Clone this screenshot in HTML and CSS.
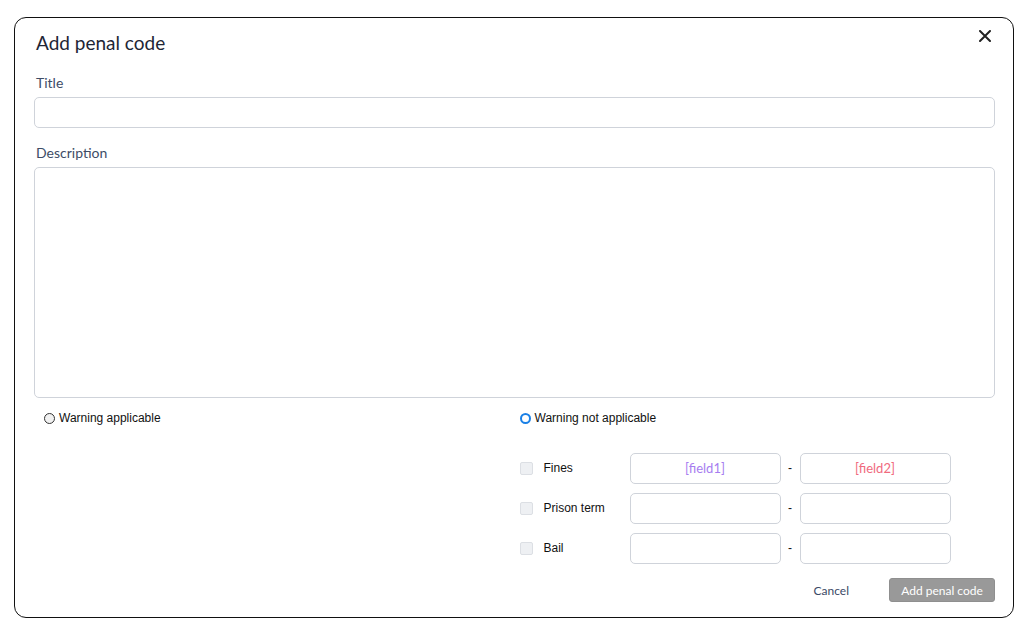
FILE: index.html
```html
<!DOCTYPE html>
<html lang="en">
<head>
    <meta charset="UTF-8">
    <meta name="viewport" content="width=device-width, initial-scale=1.0">
    <title>Add penal code</title>
    <link rel="stylesheet" href="styles.css">
</head>
<body>
    <div class="modal">
        <div class="modal-header">
            <h1>Add penal code</h1>
            <button class="close" type="button" aria-label="Close">
                <svg width="12" height="12" viewBox="0 0 12 12"><path d="M1 1L11 11M11 1L1 11" stroke="#222" stroke-width="2" stroke-linecap="round"/></svg>
            </button>
        </div>

        <form class="penal-form">
            <label class="field-label" for="title">Title</label>
            <input class="text-input" type="text" id="title">

            <label class="field-label desc-label" for="description">Description</label>
            <textarea class="text-area" id="description"></textarea>

            <div class="options">
                <div class="col left-col">
                    <label class="radio"><span class="radio-dot"></span>Warning applicable</label>
                </div>
                <div class="col right-col">
                    <label class="radio"><span class="radio-dot checked"></span>Warning not applicable</label>

                    <div class="ranges">
                        <div class="range-row">
                            <span class="check"></span>
                            <span class="range-label">Fines</span>
                            <input class="range-input purple" type="text" value="[field1]">
                            <span class="dash">-</span>
                            <input class="range-input pink" type="text" value="[field2]">
                        </div>
                        <div class="range-row">
                            <span class="check"></span>
                            <span class="range-label">Prison term</span>
                            <input class="range-input" type="text">
                            <span class="dash">-</span>
                            <input class="range-input" type="text">
                        </div>
                        <div class="range-row">
                            <span class="check"></span>
                            <span class="range-label">Bail</span>
                            <input class="range-input" type="text">
                            <span class="dash">-</span>
                            <input class="range-input" type="text">
                        </div>
                    </div>
                </div>
            </div>

            <div class="actions">
                <button type="button" class="cancel">Cancel</button>
                <button type="submit" class="submit">Add penal code</button>
            </div>
        </form>
    </div>
</body>
</html>
```

FILE: styles.css
```css
body {
    margin: 0;
    padding: 17px 18px 0 14px;
    background: #fff;
    font-family: "Source Sans Pro", Lato, "Noto Sans", sans-serif;
    color: #222;
}
.modal {
    width: 998px;
    height: 599px;
    border: 1px solid #111;
    border-radius: 12px;
}
.modal-header {
    display: flex;
    justify-content: space-between;
    align-items: flex-start;
    padding: 12px 23px 0 21px;
    height: 44px;
}
h1 {
    margin: 0;
    font-size: 19px;
    font-weight: 400;
    color: #1e2535;
    line-height: 26px;
}
.close {
    background: none;
    border: none;
    padding: 0;
    margin-top: 0;
    margin-right: -1px;
    cursor: pointer;
    line-height: 0;
}
.penal-form {
    display: flex;
    flex-direction: column;
    padding: 0 18px 0 19px;
}
.field-label {
    font-size: 14px;
    color: #3e4c66;
    line-height: 18px;
    padding-left: 2px;
    margin-bottom: 5px;
}
.desc-label {
    margin-top: 16px;
}
.text-input {
    height: 31px;
    box-sizing: border-box;
    border: 1px solid #cfd3da;
    border-radius: 5px;
    font: inherit;
}
.text-area {
    height: 231px;
    box-sizing: border-box;
    border: 1px solid #cfd3da;
    border-radius: 5px;
    resize: none;
    font: inherit;
}
.options {
    display: flex;
    margin-top: 13px;
    font-family: "Liberation Sans", Arial, sans-serif;
    font-size: 12px;
    color: #111;
}
.col {
    width: 50%;
}
.left-col {
    padding-left: 10px;
}
.right-col {
    padding-left: 0;
}
.radio {
    display: flex;
    align-items: center;
    gap: 4px;
    height: 14px;
}
.radio-dot {
    width: 9px;
    height: 9px;
    border: 1px solid #333;
    border-radius: 50%;
    background: #f1f1f1;
    flex: none;
}
.radio-dot.checked {
    width: 7px;
    height: 7px;
    border: 2px solid #1a80e6;
    background: #fff;
}
.ranges {
    display: flex;
    flex-direction: column;
    gap: 10px;
    margin-top: 28px;
}
.range-row {
    display: flex;
    align-items: center;
    height: 30px;
}
.check {
    width: 11px;
    height: 11px;
    border: 1px solid #dcdfe4;
    border-radius: 2px;
    background: #eef0f3;
    flex: none;
}
.range-label {
    width: 86px;
    margin-left: 11px;
}
.range-input {
    width: 151px;
    height: 31px;
    box-sizing: border-box;
    border: 1px solid #cfd3da;
    border-radius: 5px;
    text-align: center;
    font-family: "Source Sans Pro", Lato, "Noto Sans", sans-serif;
    font-size: 13px;
}
.range-input.purple {
    color: #a77df0;
}
.range-input.pink {
    color: #f06a7e;
}
.dash {
    width: 19px;
    text-align: center;
}
.actions {
    display: flex;
    justify-content: flex-end;
    align-items: center;
    gap: 40px;
    margin-top: 15px;
}
.cancel {
    background: none;
    border: none;
    font-family: "Source Sans Pro", Lato, "Noto Sans", sans-serif;
    font-size: 12px;
    color: #3b4966;
    padding: 0;
    cursor: pointer;
}
.submit {
    background: #999;
    color: #fff;
    border: 1px solid #8f8f8f;
    border-radius: 3px;
    font-family: "Source Sans Pro", Lato, "Noto Sans", sans-serif;
    font-size: 12px;
    height: 24px;
    width: 106px;
    padding: 0;
}
```
